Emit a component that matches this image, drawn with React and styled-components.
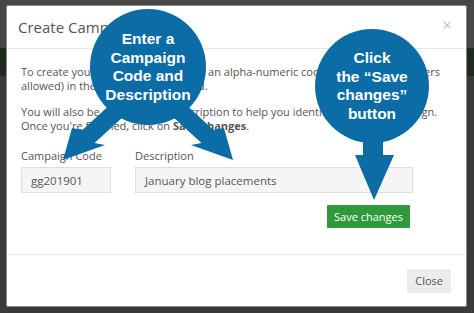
import styled, { createGlobalStyle } from "styled-components";

const GlobalStyle = createGlobalStyle`
  html, body {
    margin: 0;
    padding: 0;
  }
  body {
    width: 474px;
    height: 313px;
    overflow: hidden;
    background: linear-gradient(
      to bottom,
      #474747 0 48px,
      #1f2a1f 48px 76px,
      #3a3a3a 76px
    );
    font-family: "Open Sans", "Liberation Sans", sans-serif;
  }
`;

const Page = styled.div`
  position: relative;
  height: 313px;
  box-sizing: border-box;
  padding: 5px 0 0 6px;
`;

const Modal = styled.div`
  width: 461px;
  height: 302px;
  box-sizing: border-box;
  background: #fff;
  border: 1px solid #8a8a8a;
  border-radius: 2px;
  display: flex;
  flex-direction: column;
`;

const Header = styled.div`
  height: 43px;
  box-sizing: border-box;
  padding: 0 14px 0 11px;
  border-bottom: 1px solid #e8e8e8;
  display: flex;
  align-items: center;
  justify-content: space-between;
`;

const Title = styled.h4`
  margin: 0;
  font-size: 15px;
  font-weight: 400;
  color: #555;
`;

const CloseX = styled.span`
  font-size: 17px;
  line-height: 1;
  color: #c4c4c4;
  margin-top: -6px;
`;

const Body = styled.div`
  flex: 1;
  padding: 16px 15px 0 14px;
  color: #555;
  font-size: 11px;
`;

const Para = styled.p`
  margin: ${(p) => (p.$first ? "0" : "13px 0 0")};
  line-height: 13.5px;
  white-space: nowrap;
`;

const FormRow = styled.div`
  margin-top: 17px;
  display: flex;
  gap: 24px;
`;

const Field = styled.div`
  display: flex;
  flex-direction: column;
  gap: 4px;
`;

const Label = styled.label`
  line-height: 14px;
  color: #555;
`;

const Input = styled.div`
  width: ${(p) => p.$width}px;
  height: 26px;
  box-sizing: border-box;
  border: 1px solid #dedede;
  background: #f5f5f5;
  padding: 0 9px;
  display: flex;
  align-items: center;
  font-size: 11.5px;
  color: #555;
`;

const ActionRow = styled.div`
  width: 392px;
  margin-top: 12px;
  display: flex;
  justify-content: flex-end;
`;

const Button = styled.button`
  height: ${(p) => (p.$primary ? 23 : 24)}px;
  padding: 0 ${(p) => (p.$primary ? 7 : 8)}px;
  margin-right: ${(p) => (p.$primary ? 3 : 0)}px;
  border: none;
  border-radius: 1px;
  background: ${(p) => (p.$primary ? "#2f9a3b" : "#ececec")};
  color: ${(p) => (p.$primary ? "#fff" : "#555")};
  font-family: "Open Sans", "Liberation Sans", sans-serif;
  font-size: 11px;
`;

const Footer = styled.div`
  height: 52px;
  box-sizing: border-box;
  border-top: 1px solid #e8e8e8;
  padding: 0 15px;
  display: flex;
  align-items: center;
  justify-content: flex-end;
`;

const Overlay = styled.svg`
  position: absolute;
  left: 0;
  top: 0;
  width: 474px;
  height: 313px;
  pointer-events: none;
`;

const Callout = styled.div`
  position: absolute;
  left: ${(p) => p.$x}px;
  top: ${(p) => p.$y}px;
  width: ${(p) => p.$size}px;
  height: ${(p) => p.$size}px;
  border-radius: 50%;
  background: #0c6ca6;
  color: #fff;
  display: flex;
  align-items: center;
  justify-content: center;
  text-align: center;
  font-family: "Liberation Sans", "DejaVu Sans", sans-serif;
  font-weight: 700;
  font-size: 15.5px;
  line-height: 18.5px;
`;

const BLUE = "#0c6ca6";

export default function App() {
  return (
    <>
      <GlobalStyle />
      <Page>
        <Modal>
          <Header>
            <Title>Create Campaign</Title>
            <CloseX>×</CloseX>
          </Header>
          <Body>
            <Para $first>
              To create your new campaign, enter an alpha-numeric code (no
              special characters
              <br />
              allowed) in the Campaign Code field.
            </Para>
            <Para>
              You will also be able to add a description to help you identify
              your new campaign.
              <br />
              Once you're finished, click on <b>Save changes</b>.
            </Para>
            <FormRow>
              <Field>
                <Label>Campaign Code</Label>
                <Input $width={90}>gg201901</Input>
              </Field>
              <Field>
                <Label>Description</Label>
                <Input $width={278}>January blog placements</Input>
              </Field>
            </FormRow>
            <ActionRow>
              <Button $primary>Save changes</Button>
            </ActionRow>
          </Body>
          <Footer>
            <Button>Close</Button>
          </Footer>
        </Modal>

        <Overlay viewBox="0 0 474 313">
          <polygon
            fill={BLUE}
            points="63,160 105,145 94.6,143.1 131.1,109.6 118.9,96.4 82.4,129.9 72,128"
          />
          <polygon
            fill={BLUE}
            points="233,160 191,145 201.4,143.1 164.9,109.6 177.1,96.4 213.6,129.9 224,128"
          />
          <polygon
            fill={BLUE}
            points="363,130 383,130 383,155 394,155 374,200 355,155 363,155"
          />
        </Overlay>

        <Callout $x={90} $y={9} $size={116}>
          Enter a
          <br />
          Campaign
          <br />
          Code and
          <br />
          Description
        </Callout>
        <Callout $x={315} $y={29} $size={114}>
          Click
          <br />
          the “Save
          <br />
          changes”
          <br />
          button
        </Callout>
      </Page>
    </>
  );
}
